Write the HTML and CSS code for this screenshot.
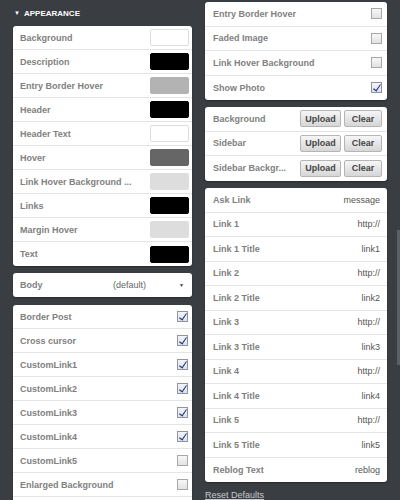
FILE: index.html
```html
<!DOCTYPE html>
<html lang="en">
<head>
    <meta charset="UTF-8">
    <title>Appearance</title>
    <link rel="stylesheet" href="styles.css">
</head>
<body>
    <div class="page">
        <!-- left column -->
        <div class="col col-left">
            <div class="section-title"><span class="caret">&#9660;</span> APPEARANCE</div>

            <div class="card">
                <div class="row"><span class="label">Background</span><span class="swatch white"></span></div>
                <div class="row"><span class="label">Description</span><span class="swatch black"></span></div>
                <div class="row"><span class="label">Entry Border Hover</span><span class="swatch silver"></span></div>
                <div class="row"><span class="label">Header</span><span class="swatch black"></span></div>
                <div class="row"><span class="label">Header Text</span><span class="swatch white"></span></div>
                <div class="row"><span class="label">Hover</span><span class="swatch dim"></span></div>
                <div class="row"><span class="label">Link Hover Background ...</span><span class="swatch light"></span></div>
                <div class="row"><span class="label">Links</span><span class="swatch black"></span></div>
                <div class="row"><span class="label">Margin Hover</span><span class="swatch light"></span></div>
                <div class="row"><span class="label">Text</span><span class="swatch black"></span></div>
            </div>

            <div class="card card-select">
                <div class="row select-row">
                    <span class="label">Body</span>
                    <span class="select-value">(default)</span>
                    <span class="select-arrow">&#9660;</span>
                </div>
            </div>

            <div class="card card-checks">
                <div class="row"><span class="label">Border Post</span><span class="check on"></span></div>
                <div class="row"><span class="label">Cross cursor</span><span class="check on"></span></div>
                <div class="row"><span class="label">CustomLink1</span><span class="check on"></span></div>
                <div class="row"><span class="label">CustomLink2</span><span class="check on"></span></div>
                <div class="row"><span class="label">CustomLink3</span><span class="check on"></span></div>
                <div class="row"><span class="label">CustomLink4</span><span class="check on"></span></div>
                <div class="row"><span class="label">CustomLink5</span><span class="check"></span></div>
                <div class="row"><span class="label">Enlarged Background</span><span class="check"></span></div>
                <div class="row"></div>
            </div>
        </div>

        <!-- right column -->
        <div class="col col-right">
            <div class="card">
                <div class="row"><span class="label">Entry Border Hover</span><span class="check"></span></div>
                <div class="row"><span class="label">Faded Image</span><span class="check"></span></div>
                <div class="row"><span class="label">Link Hover Background</span><span class="check"></span></div>
                <div class="row"><span class="label">Show Photo</span><span class="check on"></span></div>
            </div>

            <div class="card card-uploads">
                <div class="row"><span class="label">Background</span><span class="btns"><button>Upload</button><button>Clear</button></span></div>
                <div class="row"><span class="label">Sidebar</span><span class="btns"><button>Upload</button><button>Clear</button></span></div>
                <div class="row"><span class="label">Sidebar Backgr...</span><span class="btns"><button>Upload</button><button>Clear</button></span></div>
            </div>

            <div class="card card-links">
                <div class="row"><span class="label">Ask Link</span><span class="value">message</span></div>
                <div class="row"><span class="label">Link 1</span><span class="value">http://</span></div>
                <div class="row"><span class="label">Link 1 Title</span><span class="value">link1</span></div>
                <div class="row"><span class="label">Link 2</span><span class="value">http://</span></div>
                <div class="row"><span class="label">Link 2 Title</span><span class="value">link2</span></div>
                <div class="row"><span class="label">Link 3</span><span class="value">http://</span></div>
                <div class="row"><span class="label">Link 3 Title</span><span class="value">link3</span></div>
                <div class="row"><span class="label">Link 4</span><span class="value">http://</span></div>
                <div class="row"><span class="label">Link 4 Title</span><span class="value">link4</span></div>
                <div class="row"><span class="label">Link 5</span><span class="value">http://</span></div>
                <div class="row"><span class="label">Link 5 Title</span><span class="value">link5</span></div>
                <div class="row"><span class="label">Reblog Text</span><span class="value">reblog</span></div>
            </div>

            <a class="reset" href="#">Reset Defaults</a>
        </div>

        <div class="scrollbar"></div>
    </div>
</body>
</html>
```

FILE: styles.css
```css
* {
    margin: 0;
    padding: 0;
    box-sizing: border-box;
}
html, body {
    height: 500px;
    overflow: hidden;
}
body {
    background: #3a3d42;
    font-family: "Liberation Sans", Arial, sans-serif;
    font-size: 9px;
    color: #808080;
}
.page {
    position: relative;
    display: grid;
    grid-template-columns: 179px 182px;
    column-gap: 13px;
    padding-left: 13px;
}
.col {
    display: flex;
    flex-direction: column;
}
.card-select {
    margin-top: 7px;
}
.card-checks {
    margin-top: 8px;
}
.col-right {
    margin-top: 2px;
}
.card-uploads {
    margin-top: 7px;
}
.card-links {
    margin-top: 7.5px;
}
.section-title {
    height: 26px;
    display: flex;
    align-items: center;
    gap: 4px;
    padding-left: 1px;
    color: #fff;
    font-weight: bold;
    font-size: 8px;
}
.caret {
    font-size: 6px;
}
.card {
    background: #fff;
    border-radius: 3px;
    box-shadow: 0 1px 2px rgba(0, 0, 0, 0.35);
    overflow: hidden;
}
.row {
    height: 24px;
    display: flex;
    align-items: center;
    justify-content: space-between;
    padding: 0 3px 0 7px;
    border-bottom: 1px solid #e4e4e4;
}
.row:last-child {
    border-bottom: none;
}
.col-right .row {
    height: 24.5px;
    padding: 0 5px 0 8px;
}
.label {
    font-weight: bold;
    white-space: nowrap;
}
.swatch {
    width: 39px;
    height: 17px;
    border-radius: 2px;
    border: 1px solid #ddd;
}
.swatch.white { background: #fff; }
.swatch.black { background: #000; border-color: #000; }
.swatch.silver { background: #b3b3b3; border-color: #b3b3b3; }
.swatch.dim { background: #666; border-color: #666; }
.swatch.light { background: #dddddd; border-color: #dddddd; }

.check {
    width: 11px;
    height: 11px;
    margin-right: 1px;
    border: 1px solid #a8a8a8;
    background: linear-gradient(#f7f7f7, #e2e2e2);
    position: relative;
}
.check.on {
    border-color: #8f93a3;
    background: linear-gradient(#f4f5fa, #dfe1ea);
}
.check.on::after {
    content: "";
    position: absolute;
    left: 3px;
    top: 0;
    width: 3px;
    height: 7px;
    border-right: 1.5px solid #22307a;
    border-bottom: 1.5px solid #22307a;
    transform: rotate(35deg);
}
.col-right .check {
    margin-right: 0;
}

.select-row {
    padding-right: 8px;
}
.select-value {
    margin-left: auto;
    margin-right: 33px;
    color: #666;
}
.select-arrow {
    font-size: 5px;
    color: #333;
}

.btns {
    display: flex;
    gap: 3px;
}
.btns button {
    height: 17px;
    border: 1px solid #b5b5b5;
    border-radius: 2px;
    background: linear-gradient(#f6f6f6, #d6d6d6);
    font-family: "Liberation Sans", Arial, sans-serif;
    font-size: 9px;
    font-weight: bold;
    color: #444;
}
.btns button:first-child {
    width: 41px;
}
.btns button:last-child {
    width: 38px;
}
.value {
    color: #555;
    padding-right: 2px;
}
.reset {
    margin-top: 8px;
    color: #c9cbce;
    font-size: 9px;
}
.scrollbar {
    position: absolute;
    top: 230px;
    right: 0;
    width: 3px;
    height: 135px;
    background: #5c5f64;
}
```
